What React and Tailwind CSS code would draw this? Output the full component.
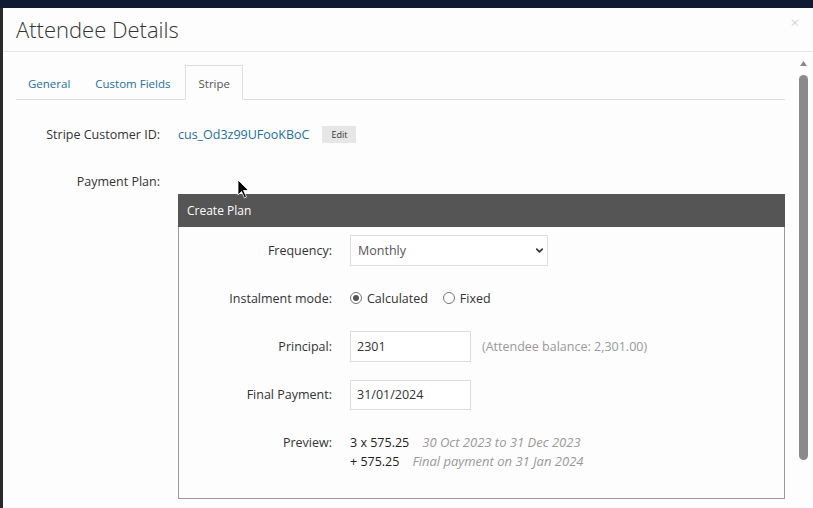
import { ChevronDown } from 'lucide-react';

function Radio({ checked, label }) {
  return (
    <label className="flex items-center gap-[5px]">
      <span className="w-[12px] h-[12px] rounded-full border border-[#767676] bg-white flex items-center justify-center">
        {checked && <span className="w-[6px] h-[6px] rounded-full bg-[#555]" />}
      </span>
      <span className="pt-[2px]">{label}</span>
    </label>
  );
}

function Row({ label, className = '', children }) {
  return (
    <div className={`flex items-center ${className}`}>
      <div className="w-[153px] text-right text-[#333] shrink-0 pt-[2px]">{label}</div>
      <div className="ml-[18px] flex items-center">{children}</div>
    </div>
  );
}

export default function App() {
  return (
    <div
      className="relative w-[813px] h-[508px] overflow-hidden bg-[#101b33] pt-[8px] flex"
      style={{ fontFamily: '"Open Sans", "Liberation Sans", sans-serif' }}
    >
      <div className="w-[3px] bg-[#2a2a2a] shrink-0" />
      <div className="flex-1 bg-[#fdfdfd] flex flex-col">
        {/* Header */}
        <div className="h-[44px] border-b border-[#e5e5e5] flex items-center justify-between pl-[13px] pr-[14px] shrink-0">
          <h1 className="text-[22px] font-light text-[#333] leading-none -mt-[1px]">Attendee Details</h1>
          <span className="text-[#c8c8c8] text-[15px] font-light self-start mt-[3px]">×</span>
        </div>

        <div className="flex flex-1 min-h-0">
          {/* Body */}
          <div className="flex-1 pl-[13px] pr-[13px] pt-[14px] text-[12.5px]">
            {/* Tabs */}
            <div className="flex border-b border-[#ddd] h-[34px] items-end">
              <div className="px-[12px] h-[34px] flex items-center pt-[3px] text-[11.5px] text-[#23709e] mr-[1px]">General</div>
              <div className="px-[12px] h-[34px] flex items-center pt-[3px] text-[11.5px] text-[#23709e] mr-[3px]">Custom Fields</div>
              <div className="px-[12px] h-[35px] -mb-[1px] flex items-center pt-[3px] text-[11.5px] text-[#555] border border-[#ddd] border-b-[#fdfdfd] bg-[#fdfdfd]">Stripe</div>
            </div>

            {/* Stripe customer */}
            <div className="flex items-center mt-[24px] pt-[2px]">
              <div className="w-[144px] text-right text-[#333]">Stripe Customer ID:</div>
              <div className="ml-[18px] text-[#23709e]">cus_Od3z99UFooKBoC</div>
              <div className="ml-[13px] w-[34px] h-[17px] bg-[#e6e6e6] text-[9px] text-[#333] flex items-center justify-center -mt-[2px]">Edit</div>
            </div>

            <div className="flex items-center mt-[26px] pt-[2px]">
              <div className="w-[144px] text-right text-[#333]">Payment Plan:</div>
            </div>

            {/* Create Plan box */}
            <div className="ml-[162px] mt-[2px] border border-[#9a9a9a] h-[305px]">
              <div className="h-[33px] bg-[#555] text-white text-[12px] flex items-center pt-[2px] px-[9px] -mx-px -mt-px">Create Plan</div>

              <Row label="Frequency:" className="mt-[8px] h-[31px]">
                <div className="w-[198px] h-[31px] border border-[#ddd] bg-white flex items-center justify-between pl-[7px] pr-[2px] text-[#555]">
                  <span className="pt-[2px]">Monthly</span>
                  <ChevronDown size={11} strokeWidth={3.5} className="text-[#333]" />
                </div>
              </Row>

              <Row label="Instalment mode:" className="mt-[17px] h-[31px]">
                <div className="flex items-center gap-[15px] text-[#333]">
                  <Radio checked label="Calculated" />
                  <Radio label="Fixed" />
                </div>
              </Row>

              <Row label="Principal:" className="mt-[17px] h-[31px]">
                <div className="w-[121px] h-[31px] border border-[#ddd] bg-white flex items-center pt-[2px] px-[6px] text-[#333]">2301</div>
                <span className="ml-[11px] pt-[2px] text-[#999]">(Attendee balance: 2,301.00)</span>
              </Row>

              <Row label="Final Payment:" className="mt-[18px] h-[30px]">
                <div className="w-[121px] h-[30px] border border-[#ddd] bg-white flex items-center pt-[2px] px-[6px] text-[#333]">31/01/2024</div>
              </Row>

              <div className="flex mt-[23px] leading-[19px]">
                <div className="w-[153px] text-right text-[#333] shrink-0">Preview:</div>
                <div className="ml-[18px] text-[#222]">
                  <div>
                    3 x 575.25<span className="ml-[13px] italic text-[13px] text-[#999]">30 Oct 2023 to 31 Dec 2023</span>
                  </div>
                  <div>
                    + 575.25<span className="ml-[13px] italic text-[13px] text-[#999]">Final payment on 31 Jan 2024</span>
                  </div>
                </div>
              </div>
            </div>
          </div>

          {/* Scrollbar */}
          <div className="w-[15px] shrink-0 flex flex-col items-start pl-[1px] pt-[8px]">
            <svg width="9" height="7" viewBox="0 0 9 7" className="text-[#8a8a8a]">
              <path d="M4.5 1 L8 6 L1 6 Z" fill="currentColor" />
            </svg>
            <div className="w-[9px] h-[385px] mt-[8px] rounded-full bg-[#8a8a8a]" />
          </div>
        </div>
      </div>

      {/* Mouse cursor */}
      <svg width="14" height="22" viewBox="0 0 14 22" className="absolute left-[237px] top-[179px]">
        <path d="M1 1 L1 16 L4.5 12.5 L7.5 19 L9.5 18 L6.5 11.5 L11.5 11.5 Z" fill="#000" stroke="#fff" strokeWidth="0.8" />
      </svg>
    </div>
  );
}
